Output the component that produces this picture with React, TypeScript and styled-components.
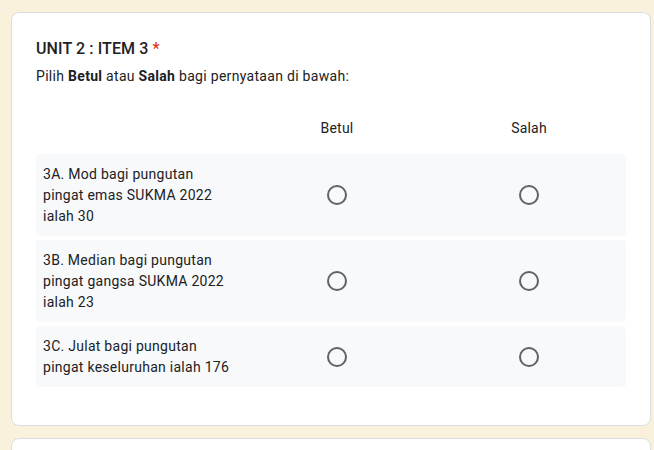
import React from "react";
import styled, { createGlobalStyle } from "styled-components";

const Global = createGlobalStyle`
  html, body {
    margin: 0;
    padding: 0;
    background: #f9f1db;
  }
  body {
    font-family: Roboto, "Liberation Sans", Arial, sans-serif;
    color: #202124;
  }
`;

const Page = styled.div`
  display: flex;
  flex-direction: column;
  gap: 12px;
  padding: 12px 0 0 11px;
  height: 450px;
  box-sizing: border-box;
  overflow: hidden;
`;

const Card = styled.div<{ $empty?: boolean }>`
  width: 640px;
  box-sizing: border-box;
  flex-shrink: 0;
  background: #ffffff;
  border: 1px solid #dadce0;
  border-radius: 8px;
  padding: ${(p) => (p.$empty ? "0" : "24px 24px 38px")};
  height: ${(p) => (p.$empty ? "60px" : "auto")};
`;

const Title = styled.div`
  font-size: 16px;
  line-height: 24px;
  font-weight: 500;
  letter-spacing: 0.1px;
  color: #202124;
`;

const Required = styled.span`
  color: #d93025;
  margin-left: 4px;
`;

const Subtitle = styled.div`
  margin-top: 5px;
  font-size: 14px;
  line-height: 20px;
  font-weight: 400;
  letter-spacing: 0.3px;
  b {
    font-weight: 700;
  }
`;

const Grid = styled.div`
  margin-top: 32px;
  display: flex;
  flex-direction: column;
  gap: 4px;
`;

const HeaderRow = styled.div`
  display: grid;
  grid-template-columns: 205px 192px 192px;
  padding-bottom: 12px;
`;

const HeaderCell = styled.div`
  text-align: center;
  font-size: 14px;
  line-height: 20px;
  letter-spacing: 0.2px;
`;

const Row = styled.div`
  display: grid;
  grid-template-columns: 205px 192px 192px;
  align-items: center;
  background: #f8f9fa;
  border-radius: 4px;
`;

const Label = styled.div`
  padding: 9.5px 8px 9.5px 7px;
  font-size: 14px;
  line-height: 21px;
  letter-spacing: 0.27px;
  max-width: 192px;
`;

const Cell = styled.div`
  display: flex;
  justify-content: center;
  align-items: center;
`;

const Radio = styled.div`
  width: 20px;
  height: 20px;
  box-sizing: border-box;
  border: 2px solid #5f6368;
  border-radius: 50%;
`;

const rows = [
  ["3A. Mod bagi pungutan", "pingat emas SUKMA 2022", "ialah 30"],
  ["3B. Median bagi pungutan", "pingat gangsa SUKMA 2022", "ialah 23"],
  ["3C. Julat bagi pungutan", "pingat keseluruhan ialah 176"],
];

export default function App() {
  return (
    <>
      <Global />
      <Page>
        <Card>
          <Title>
            UNIT 2 : ITEM 3<Required>*</Required>
          </Title>
          <Subtitle>
            Pilih <b>Betul</b> atau <b>Salah</b> bagi pernyataan di bawah:
          </Subtitle>
          <Grid>
            <HeaderRow>
              <div />
              <HeaderCell>Betul</HeaderCell>
              <HeaderCell>Salah</HeaderCell>
            </HeaderRow>
            {rows.map((lines, i) => (
              <Row key={i}>
                <Label>
                  {lines.map((l, j) => (
                    <div key={j}>{l}</div>
                  ))}
                </Label>
                <Cell>
                  <Radio />
                </Cell>
                <Cell>
                  <Radio />
                </Cell>
              </Row>
            ))}
          </Grid>
        </Card>
        <Card $empty />
      </Page>
    </>
  );
}
